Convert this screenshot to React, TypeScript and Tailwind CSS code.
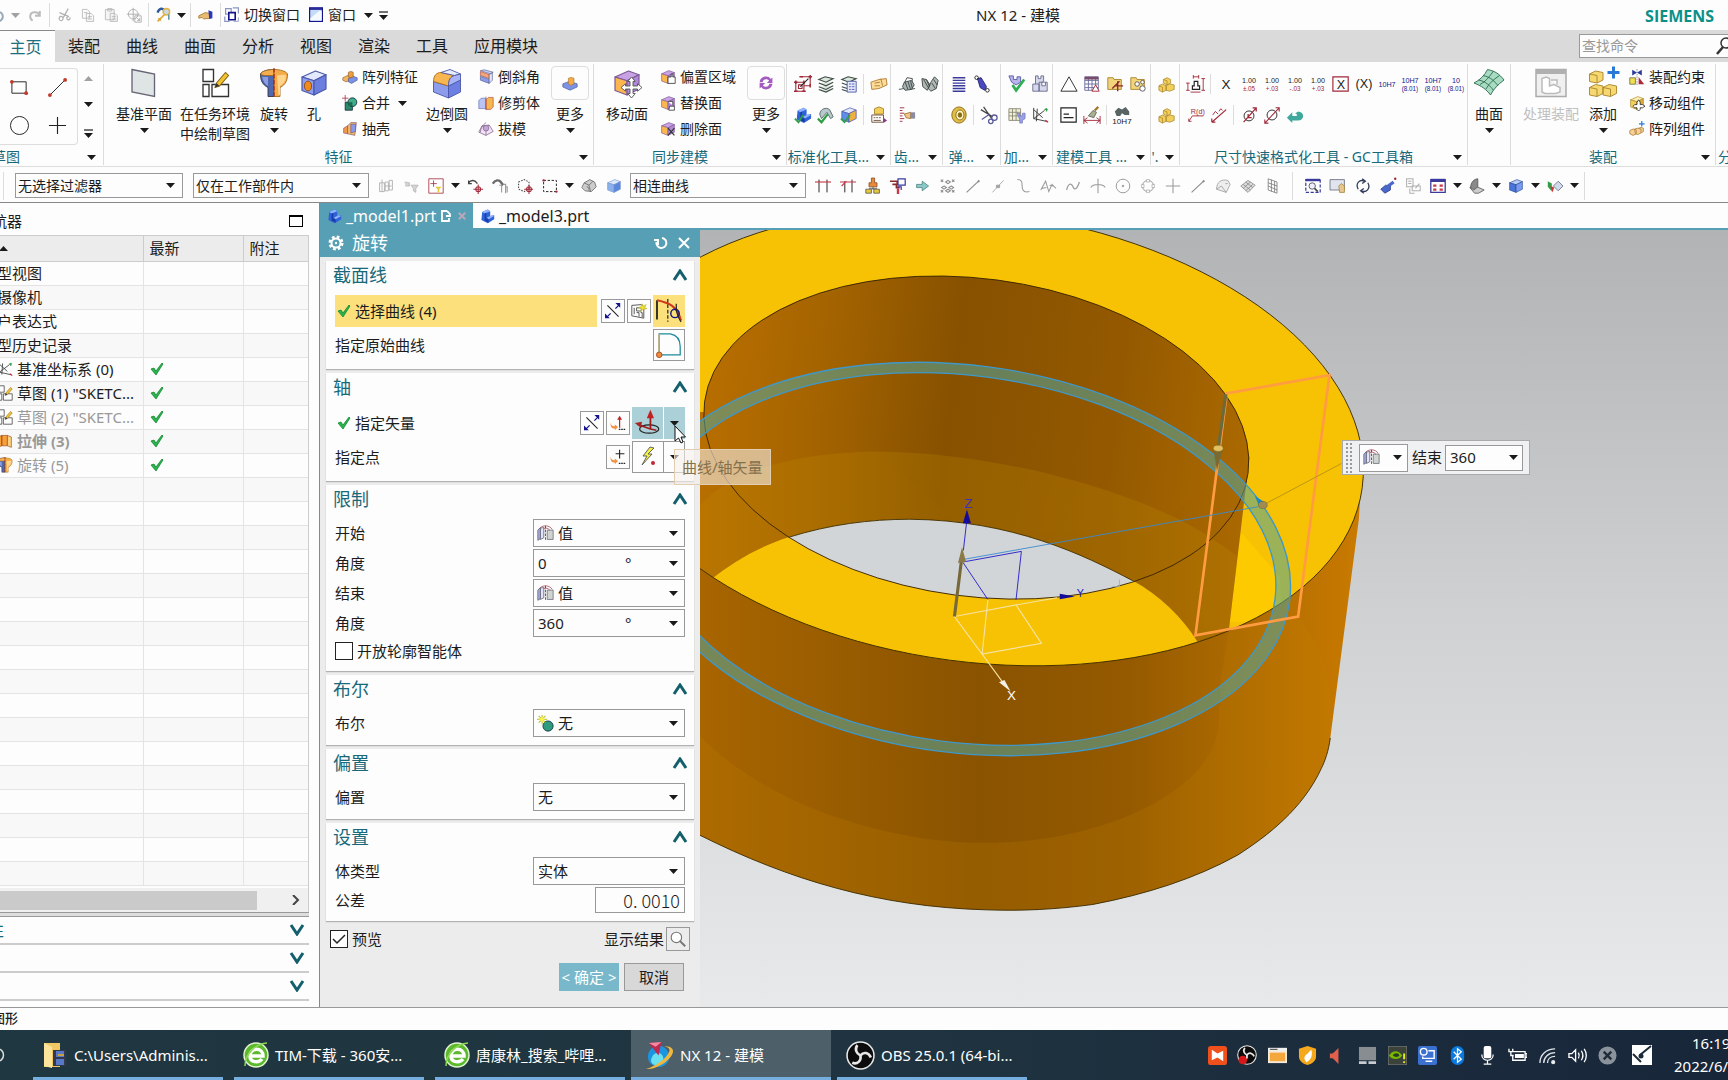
import type { ReactNode } from "react";

const K = "#222";
const NAVY = "#14148c";
const RED = "#a02838";
const G = "#9a9a9a";

function Cube({ top = "#e4e8fc", left = "#8f9ff0", right = "#6c7de0", stroke = "#4a58a8" }) {
  return (
    <g stroke={stroke} strokeWidth=".8" strokeLinejoin="round">
      <path d="M2 6 11 2l7 2.500-8 4z" fill={top} />
      <path d="M2 6l8 2.500V18l-8-3z" fill={left} />
      <path d="M10 8.500l8-4V14l-8 4z" fill={right} />
    </g>
  );
}

function DimText({ a, b, color = K, sub = RED }: { a: string; b?: string; color?: string; sub?: string }) {
  return (
    <g fontFamily="Liberation Sans, sans-serif" textAnchor="middle">
      <text x="10" y={b ? 9 : 13} fontSize="8" fill={color}>{a}</text>
      {b ? <text x="10" y="18" fontSize="7" fill={sub}>{b}</text> : null}
    </g>
  );
}

const gold = { top: "#fdf0b0", left: "#f2cf5a", right: "#d9ae38", stroke: "#a8842a" };
const purple = { top: "#c9a2e6", left: "#fbb64e", right: "#b088d8", stroke: "#7c5a94" };

const boxes = (
  <g stroke="#a8842a" strokeWidth=".8" fill="#f2cf5a">
    <path d="M6 5l4-2 4 2v4l-4 2-4-2z" />
    <path d="M1 12l4-2 4 2v5l-4 2-4-2zM9 12l4-2 5 1v5l-5 2-4-1z" />
    <path d="M1 12l4 1.500V19M6 5l4 1.500V11" fill="none" />
  </g>
);

const partBlock = (
  <g>
    <path d="M4 5l7-3 3 2v6l5-1v5l-8 5-8-4z" fill="#2f62d8" />
    <path d="M4 5l7-3 3 2-7 3zM10 12l6-3 3 1-7 4z" fill="#8fb4ff" />
    <path d="M7 7v9l5 2v-4l-3-1V6z" fill="#1a3ea8" />
  </g>
);

const icons: Record<string, ReactNode> = {
  undo: <path d="M4 4v6h6M4 10c2-6 12-5 12 2 0 3-2 5-5 6" stroke="#9ab" strokeWidth="2.500" fill="none" />,
  redo: <path d="M16 5v6h-6M16 10c-3-5-12-5-12 2 0 2 1 4 3 5" stroke="#bbb" strokeWidth="2.500" fill="none" />,
  cut: <path d="M14 2 8 13M3 7l12 5M6 12a2.500 2.500 0 1 0 1 4 2.500 2.500 0 0 0-1-4zM14 12a2 2 0 1 0 2 1" stroke="#b0b0b0" strokeWidth="1.500" fill="none" />,
  copy: <path d="M3 3h6l3 3v8H3zM8 8h6l3 3v7H8zM10 12h5M10 15h5M5 7h4" stroke="#b4b4b4" fill="#fafafa" />,
  paste: <path d="M3 3h11v13H3zM6 2h5v3H6zM9 8h6l3 3v7H9zM11 12h5M11 15h5" stroke="#b4b4b4" fill="#f4f4f4" />,
  target: <path d="M9 1v17M1 9h16M3 9a6 6 0 1 0 12 0A6 6 0 1 0 3 9M11 11h8v8h-8zM13 13l4 4M17 14v3h-3" stroke="#a4a4a4" fill="none" />,
  key: (
    <g fill="none" strokeWidth="2">
      <path d="M2 7c2-6 7-6 9-2l2 4" stroke="#2d5a9e" strokeWidth="3" />
      <path d="M2 18l9-9M3 14l3 3" stroke="#d9a830" />
      <circle cx="13" cy="6" r="4" stroke="#e0b848" fill="#c8d8f0" />
      <path d="M16 9v7" stroke="#6a9aa8" />
    </g>
  ),
  hand: (
    <g>
      <path d="M1 11l8-4 6 1v6l-8 1-2-2-4 1z" fill="#e8bc74" stroke="#a57628" />
      <path d="M13 4l5 2v8l-4 1z" fill="#2c36b8" />
    </g>
  ),
  winSwitch: (
    <g fill="none">
      <path d="M2 2h7v7H2zM11 1h7v7M1 12v6h6" stroke="#8a96c0" strokeWidth="1.500" />
      <path d="M6 7h8v9H6z" stroke={NAVY} strokeWidth="2" fill="#fff" />
      <path d="M12 18h6v-5" stroke="#8a96c0" />
    </g>
  ),
  win: (
    <g>
      <rect x="2" y="1" width="16" height="17" fill="#c4dcfa" stroke={NAVY} strokeWidth="1.500" />
      <path d="M3 14 14 5h3v12H3z" fill="#f4faff" />
      <path d="M2 2.500h16" stroke={NAVY} strokeWidth="2" />
    </g>
  ),
  rect: (
    <g>
      <path d="M2 4h15v12H2z" fill="none" stroke={K} />
      <circle cx="2" cy="4" r="2" fill="#c0392b" />
      <circle cx="17" cy="16" r="2" fill="#c0392b" />
    </g>
  ),
  line: (
    <g>
      <path d="M2 18 18 2" stroke={K} />
      <circle cx="2" cy="18" r="2" fill="#c0392b" />
      <circle cx="18" cy="2" r="2" fill="#c0392b" />
    </g>
  ),
  circle: <circle cx="10" cy="10" r="9.500" fill="none" stroke={K} />,
  plus: <path d="M10 1v18M1 10h18" stroke={K} strokeWidth="1.200" />,
  plane: <path d="M2 1l15 3v15L2 16z" fill="#dfe5e4" stroke="#667" strokeWidth=".9" />,
  sketch: (
    <g>
      <path d="M2 1h7v8H2zM2 11h4v8H2zM8 11h11v8H8z" fill="#fff" stroke="#333" strokeWidth=".9" />
      <path d="M10 13l1-3 6-7 2 2-6 7z" fill="#f2c530" stroke="#8a6414" strokeWidth=".7" />
      <path d="M10 13l1-3 2 2z" fill="#333" />
    </g>
  ),
  revolve: (
    <g strokeWidth=".6">
      <path d="M1 4c1-2 5-3 9-3v18H6v-6C2 11 1 8 1 4z" fill="#5068b0" stroke="#334" />
      <path d="M1 4c1-2 5-3 9-3v4H6c-2 0-4 0-5-1z" fill="#f5ae52" stroke="#a66a1c" />
      <path d="M2 6c1 3 2 5 4 6v-6z" fill="#8a9ee0" />
      <path d="M10 1c4 0 8 1 9 3 0 4-1 7-5 9v6h-4z" fill="#f5ac48" stroke="#a66a1c" />
      <path d="M12 5c3 0 5-1 6 0 0 4-2 6-4 7v6h-1z" fill="#ffd48c" />
      <path d="M10 0v20" stroke="#a02020" strokeWidth=".8" strokeDasharray="3 1" />
    </g>
  ),
  hole: (
    <g>
      <Cube />
      <ellipse cx="6" cy="12" rx="2.400" ry="3.300" fill="#f08a1c" stroke="#8a4a10" strokeWidth=".6" />
    </g>
  ),
  pattern: (
    <g stroke="#7a5224" strokeWidth=".7">
      <path d="M1 11l6-3 4 2v4l-6 2-4-2z" fill="#f6b45c" />
      <path d="M8 12l6-3 5 2v3l-7 4-4-2z" fill="#7c92e4" stroke="#3a4a90" />
      <path d="M8 4l3-1 3 1v6l-3 1-3-1z" fill="#f09c3c" />
    </g>
  ),
  unite: (
    <g>
      <path d="M4 0v8M0 4h8" stroke="#b03048" />
      <path d="M4 9h9v10H4z" fill="#2c8a6c" stroke="#123" />
      <circle cx="13" cy="9" r="5.500" fill="#3fae8a" stroke="#123" />
      <path d="M8 9h5v5H8z" fill="#1c6a50" />
    </g>
  ),
  shell: (
    <g stroke="#6a4a70" strokeWidth=".7">
      <path d="M2 9l5-3v10l-5-1z" fill="#f0984c" />
      <path d="M7 6l4-4h7l-2 16-9-2z" fill="#f6b868" />
      <path d="M11 4h6v9l-6 2z" fill="#8a9ae8" />
    </g>
  ),
  edge: (
    <g strokeWidth=".6" stroke="#4a58a8">
      <path d="M1 9l10 3v8l-10-4z" fill="#8e9cec" />
      <path d="M11 12l8-4v8l-8 4z" fill="#6d7fe2" />
      <path d="M1 9c0-4 2-6 5-6l9 2c-3 1-4 3-4 7z" fill="#f8b650" stroke="#a86a1c" />
      <path d="M6 3l6-2 7 3-4 1z" fill="#e8ecff" />
      <path d="M15 5l4-1v4l-8 4c0-4 1-6 4-7z" fill="#a9b4f6" />
    </g>
  ),
  chamfer: (
    <g strokeWidth=".7" stroke="#44507c">
      <path d="M3 2l12 4 4-2-11-3z" fill="#c7cff8" />
      <path d="M3 3l11 4v5L3 8z" fill="#f2a87c" stroke="#a03838" />
      <path d="M3 9l11 4v5L3 14z" fill="#8e9cec" />
      <path d="M14 7l4-2v9l-4 4z" fill="#dfe3fb" />
    </g>
  ),
  trim: (
    <g strokeWidth=".7">
      <path d="M1 7l3-3h6v13H1z" fill="#b9c4f4" stroke="#4a58a8" />
      <path d="M10 6l3-3h6v12l-3 3h-6z" fill="#f8b650" stroke="#a03838" />
      <path d="M10 2v17" stroke="#a03838" />
    </g>
  ),
  draft: (
    <g fill="none" stroke="#8a6a94">
      <path d="M1 14 5 6l9-1 5 8-9 5z" fill="#efe4f4" />
      <path d="M10 18V9M5 6l5 3 4-4M3 14c0-5 3-9 7-12" />
      <circle cx="10" cy="9" r="3.500" fill="#c6a6d8" />
    </g>
  ),
  more1: (
    <g strokeWidth=".7">
      <path d="M1 11l8-3 10 3v4l-9 4-9-4z" fill="#7c92e4" stroke="#3a4a90" />
      <path d="M8 4l3-1 4 1v7l-4 2-3-2z" fill="#f5ac48" stroke="#a66a1c" />
    </g>
  ),
  moveFace: (
    <g>
      <Cube {...purple} />
      <path d="M13 6l2.500 3h-1.500v3h3V10.500l3 2.500-3 2.500V14h-3v3h1.500L13 20l-2.500-3H12v-3H9v1.500L6 13l3-2.500V12h3V9h-1.500z" fill="#fff" stroke="#555" strokeWidth=".6" />
    </g>
  ),
  offset: (
    <g>
      <Cube {...purple} />
      <path d="M10 10h4V6h2v4h3v8h-9z" fill="#fff" stroke="#333" />
    </g>
  ),
  replace: (
    <g>
      <Cube {...purple} />
      <path d="M10 8h6v5M12 14h6v5h-7z" fill="#fff" stroke="#333" />
    </g>
  ),
  del: (
    <g>
      <Cube {...purple} />
      <path d="M10 9l8 9M18 9l-8 9" stroke="#333" strokeWidth="1.500" />
    </g>
  ),
  sync: <path d="M2 9c1-8 11-9 14-4l2-2v7h-7l3-3c-3-3-8-2-8 2zM18 11c-1 8-11 9-14 4l-2 2v-7h7l-3 3c3 3 8 2 8-2z" fill="#a45cc0" />,
  std1: (
    <g fill="none" stroke={RED} strokeWidth="1.200">
      <path d="M8 2h10v10h-7M2 8h9v10H2zM5 11h4v4H5z" />
      <path d="M6 2h4M18 0v4M16 2h4M18 10v4M2 6v4M0 8h4M0 18h4M9 18h4M11 6v4" strokeWidth="1.600" />
      <path d="M7 13l9-9" stroke={K} />
    </g>
  ),
  layers: <path d="M2 5l7-3 9 2-8 4zM2 9l8 3 8-4M2 13l8 3 8-4M2 16l8 3 8-4" fill="#dde6dd" stroke="#3c4c46" strokeWidth="1.200" />,
  layersDoc: (
    <g>
      <path d="M2 5l7-3 9 2-8 4zM2 9l6 2M2 13l6 2M2 16l6 2" fill="#dde6dd" stroke="#3c4c46" strokeWidth="1.200" />
      <path d="M8 7h10v12H8zM10 10h2M13 10h3M10 13h2M13 13h3M10 16h2M13 16h3" fill="#e6e8fc" stroke="#4a58a8" />
    </g>
  ),
  tag: <path d="M1 8l9-3 8-1 1 7-9 4-8 1zM5 9l6-1M5 12h6M12 4l2 8" fill="#fbdc98" stroke="#b07a30" />,
  chkBlock: (
    <g>
      {partBlock}
      <path d="M1 14l4 4 5-8" stroke="#2f9e44" strokeWidth="2" fill="none" />
    </g>
  ),
  chkTool: (
    <g fill="none">
      <path d="M3 9c1-6 7-8 11-5l4 8-3 2-4-7-6 7z" fill="#b8c8cc" stroke="#566" />
      <path d="M1 14l4 4 7-9" stroke="#2f9e44" strokeWidth="2.500" />
    </g>
  ),
  chkCube: (
    <g>
      <Cube left="#5d8fe8" right="#f0b040" />
      <path d="M1 14l4 4 6-8" stroke="#2f9e44" strokeWidth="2" fill="none" />
    </g>
  ),
  calc: (
    <g>
      <path d="M5 3l5-2 5 2v6H5z" fill="#f2cf5a" stroke="#a8842a" />
      <path d="M2 10h13v8H2zM4 13h2M7 13h2M10 13h2M4 16h8" fill="#fff" stroke="#6a4a30" />
      <path d="M15 13l4 3-4 3z" fill="#8a3a8a" />
    </g>
  ),
  gear1: (
    <g fill="#a8b2b2" stroke="#3c4444">
      <path d="M7 9l3-6 6 1-1 8M1 16l6-1 2-4M19 15l-5 1" fill="none" />
      <path d="M7 8l8-2 3 5-3 5-7 1-3-4z" />
      <path d="M8 8l3 8M11 7l3 9M14 7l2 8" fill="none" />
    </g>
  ),
  gear2: (
    <g fill="#b2b8b2" stroke="#3c4444">
      <path d="M1 4l5 1 4 6-3 6-5-4zM11 8l4-6 4 4-2 9-6 3-3-3z" />
      <path d="M3 5l5 9M6 5l3 7M12 9l4 6M14 5l4 6" fill="none" />
    </g>
  ),
  ruler: (
    <g>
      <path d="M2 2h5M2 5h3M2 8h5M2 11h3M2 14h5M2 17h3" stroke={RED} />
      <path d="M7 9l7-2v7l-5-1z" fill="#f1c590" stroke="#a57628" />
      <path d="M14 7h5v7h-5z" fill="#8a8aa0" />
    </g>
  ),
  spring: <path d="M3 3h14M3 6h14M3 9h14M3 12h14M3 15h14M3 18h14" stroke="#3a3a9c" strokeWidth="1.600" />,
  shock: (
    <g>
      <path d="M5 4l4-1 6 10-2 4-5-3z" fill="#4a4ac0" stroke="#22226c" />
      <circle cx="4" cy="3" r="2" fill="none" stroke={K} />
      <circle cx="16" cy="17" r="2" fill="none" stroke={K} />
    </g>
  ),
  coil: (
    <g stroke="#8a6a14">
      <ellipse cx="10" cy="10" rx="8" ry="9" fill="#e0bc48" />
      <ellipse cx="11" cy="10" rx="4.500" ry="5.500" fill="#fff6c8" />
      <ellipse cx="11" cy="10" rx="2" ry="2.500" fill="#8a6a14" />
    </g>
  ),
  scissor: (
    <g fill="none" stroke="#5a5a9c" strokeWidth="1.400">
      <path d="M4 1l9 13M1 4l13 8" stroke="#444" />
      <path d="M2 15l9-6" />
      <circle cx="16" cy="13" r="3" />
      <circle cx="12" cy="17" r="2.500" />
    </g>
  ),
  chkPurple: (
    <g>
      <path d="M1 1h5v4h4V2h4v6l-5 3-5-3z" fill="#b9b4ec" stroke="#5a5aa8" />
      <path d="M5 11l4 6 9-12" stroke="#2fae54" strokeWidth="3" fill="none" />
    </g>
  ),
  stack: (
    <g fill="#d6d8ec" stroke="#6a6a90">
      <path d="M5 1h3v3h3V1h3v6l-3 2v3H5z" />
      <path d="M2 10h7v8H2zM9 8h9v10H9zM12 8v4h4V8" />
    </g>
  ),
  gridTool: (
    <g>
      <path d="M1 3h13v13H1zM1 7h13M1 11h13M5 3v13M9 3v13" fill="#f2efd8" stroke="#8a8a74" />
      <path d="M10 8h3v3h3V8h3v6l-3 2v3h-3v-4z" fill="#9aa2e8" stroke="#5a5aa8" strokeWidth=".6" />
    </g>
  ),
  csys: (
    <g fill="none" stroke="#333">
      <path d="M3 2v12l14 3M3 14l12-9M3 4l10 9M7 3l-1 14" />
      <path d="M18 3l-3 1M18 3l-1 3" stroke="#2f9e44" strokeWidth="1.500" />
      <path d="M16 16l3 2" stroke="#c02838" strokeWidth="1.500" />
    </g>
  ),
  tri: <path d="M10 2l9 16H1z" fill="none" stroke={K} />,
  table: (
    <g>
      <path d="M2 2h15v15H2zM2 6h15M2 10h15M2 14h15M6 2v15M10 2v15M14 2v15" fill="#fff" stroke="#6a6a9a" />
      <path d="M2 2h15v3H2z" fill="#7a4a6a" />
      <path d="M14 11l4 7h-8z" fill="#fff" stroke={RED} />
    </g>
  ),
  folderPlus: (
    <g>
      <path d="M2 3h6l1 2h8v11H2z" fill="#f2d47a" stroke="#a8842a" />
      <path d="M7 15l8-8M9 12h10M13 7v11" stroke="#8a2a2a" strokeWidth="1.500" />
    </g>
  ),
  folderGear: (
    <g>
      <path d="M2 3h6l1 2h8v11H2z" fill="#f2d47a" stroke="#a8842a" />
      <circle cx="9" cy="10" r="2.500" fill="#fff" stroke="#555" />
      <circle cx="15" cy="8" r="2" fill="#fff" stroke="#555" />
      <circle cx="15" cy="15" r="3" fill="#fff" stroke="#555" />
    </g>
  ),
  note: <path d="M1 2h17v16H1zM4 9h6M4 13h11" fill="#fff" stroke={K} strokeWidth="1.300" />,
  brush: (
    <g>
      <path d="M6 11l5-6 4 2-3 6z" fill="#a8b090" stroke="#666" />
      <path d="M13 5l4-4" stroke="#a57628" strokeWidth="2.500" />
      <path d="M1 11v9M19 11v9M1 16h18M5 13l-4 3 4 3M15 13l4 3-4 3" stroke={RED} fill="none" />
    </g>
  ),
  find: (
    <g>
      <path d="M2 6l4-4 4 2 4-3 4 5v4h-5l-3-2-2 3H4z" fill="#586464" />
      <text x="10" y="20" fontSize="9" fontFamily="Liberation Sans, sans-serif" textAnchor="middle" fill={K}>10H7</text>
    </g>
  ),
  boxes,
  dim: (
    <g fill="none" stroke={RED}>
      <path d="M1 9v8M-1 9h4M-1 17h4M18 4v13M16 4h4M16 17h4M7 2h6M7 0v4M13 0v4M4 19h11" />
      <path d="M6 16v-4h2V7h4v5h2v4z" stroke={K} strokeWidth="1.300" />
    </g>
  ),
  x: <text x="10" y="15" fontSize="15" fontFamily="Liberation Sans, sans-serif" textAnchor="middle" fill={K}>X</text>,
  d1: <DimText a="1.00" b="±.05" />,
  d2: <DimText a="1.00" b="+.03" />,
  d3: <DimText a="1.00" b="-.03" />,
  xBox: (
    <g>
      <path d="M1 2h17v16H1z" fill="none" stroke={RED} strokeWidth="1.300" />
      <text x="10" y="15" fontSize="14" fontFamily="Liberation Sans, sans-serif" textAnchor="middle" fill={K}>X</text>
    </g>
  ),
  xPar: <text x="10" y="14" fontSize="14" fontFamily="Liberation Sans, sans-serif" textAnchor="middle" fill={K}>(X)</text>,
  h1: <DimText a="10H7" color={NAVY} />,
  h2: <DimText a="10H7" b="(8.01)" color={NAVY} sub={NAVY} />,
  h3: <DimText a="10" b="(8.01)" color={NAVY} sub={NAVY} />,
  ra: (
    <g fill="none" stroke={RED}>
      <path d="M2 17l4-6h12M2 17v-3M2 17h3" />
      <text x="12" y="9" fontSize="8" fontFamily="Liberation Sans, sans-serif" textAnchor="middle" fill={RED} stroke="none">R(d)</text>
    </g>
  ),
  rb: (
    <g fill="none" stroke={RED}>
      <path d="M2 18 18 4M2 18v-4M2 18h4" strokeWidth="1.300" />
      <path d="M3 10l3-4 3 3M10 6l2-3 2 2" />
    </g>
  ),
  dia1: (
    <g fill="none">
      <circle cx="10" cy="11" r="5.500" stroke={K} />
      <path d="M4 18 18 2M14 2h4v4M9 9v4h4" stroke={RED} strokeWidth="1.400" />
    </g>
  ),
  dia2: (
    <g fill="none">
      <circle cx="10" cy="10" r="5.500" stroke={K} />
      <path d="M2 19 18 2M2 15v4h4M14 2h4v4" stroke={RED} strokeWidth="1.200" />
    </g>
  ),
  back: <path d="M1 13l6-6v4h5V9l-2-1 4-2c4 1 5 3 5 5 0 3-2 5-6 5H7v3z" fill="#3fa89c" />,
  surface: (
    <g stroke="#2c6a50" strokeWidth=".6">
      <path d="M0 10c4-2 7-5 9-9 5 1 8 3 11 7-4 3-7 6-9 10-3-4-6-6-11-8z" fill="#a8dcc2" />
      <path d="M3 8c5 1 8 4 10 7M6 5c5 1 8 4 10 7M4 11c4-2 6-5 9-9M8 14c2-4 6-7 9-9" fill="none" />
    </g>
  ),
  procAsm: (
    <g>
      <path d="M0 1h20v18H0z" fill="#f0f0f0" stroke="#aaa" />
      <path d="M0 1h20v3H0z" fill="#b0b0b0" />
      <path d="M4 7l3-1 2 1v5l3-1 4 2v3l-3 1H6l-2-1zM10 8h4v3" fill="#fff" stroke="#bbb" />
    </g>
  ),
  addComp: (
    <g>
      <g stroke="#a8842a" strokeWidth=".6" fill="#f6d870">
        <path d="M1 4l4-2 5 1v5l-4 2-5-1zM1 13l4-2 5 1v5l-4 2-5-1zM10 13l4-2 5 1v5l-4 2-5-1z" />
        <path d="M1 4l5 1v5M1 13l5 1v5M10 13l5 1v5" fill="none" />
      </g>
      <path d="M17-1v8M13 3h8" stroke="#2878d8" strokeWidth="2" />
    </g>
  ),
  constraint: (
    <g>
      <path d="M4 1v7l12-7v7L4 1z" fill="#2a3a9c" />
      <path d="M1 11h7v8H1z" fill="#f2e04a" stroke="#665" />
      <path d="M12 10l7 9h-7z" fill="#b02838" />
      <path d="M10 0v20" stroke="#888" strokeDasharray="2 1" />
    </g>
  ),
  moveComp: (
    <g>
      <Cube {...gold} />
      <path d="M12 6l2 3v3h3l3 2-3 2h-3v2l-2 2-2-2v-2H7l-2-2 2-2h3V9z" fill="#fff" stroke={K} />
    </g>
  ),
  patComp: (
    <g>
      <path d="M1 12l4-2 4 1v5l-4 2-4-2zM7 10l4-1 4 1v5l-4 2-3-1zM12 9l3-1 3 1v4l-3 2" fill="#f6d098" stroke="#b0803a" />
      <path d="M16 0v7M12.500 3.500h7" stroke="#2878d8" strokeWidth="1.500" />
    </g>
  ),
  f1: <path d="M2 6h6v11H2zM5 2v15M9 5h4v11H9zM14 3h4v12h-4zM9 10h8" fill="none" stroke="#b4b4b4" strokeWidth="1.200" />,
  f2: <path d="M2 5l6 1v4H3M10 9h9l-3 4v5l-3-2v-3z" fill="#d4d4d4" stroke="#b4b4b4" />,
  f3: (
    <g>
      <path d="M1 1h18v18H1z" fill="#fff" stroke={RED} />
      <path d="M7 3v8M3 7h8" stroke={RED} />
      <path d="M9 11h8l-3 3v4h-2v-4z" fill="#e8c83a" />
    </g>
  ),
  f4: (
    <g fill="none">
      <path d="M2 6c3-4 8-4 11 1M2 3v4h4" stroke="#444" strokeWidth="1.600" />
      <path d="M14 8v12M8 14h12M11 14a3 3 0 1 0 6 0 3 3 0 0 0-6 0" stroke={RED} strokeWidth="1.300" />
    </g>
  ),
  f5: (
    <g fill="none">
      <path d="M1 7c3-5 8-5 10-2l3 4" stroke="#6a6a6a" strokeWidth="3" />
      <path d="M9 9h3v9M14 8h3v11M17 11h2v7" stroke="#9a9a9a" strokeWidth="1.400" />
    </g>
  ),
  f6: (
    <g fill="none">
      <path d="M2 5l7-3 6 3v8l-6 4-7-3z" stroke="#444" strokeWidth="1.300" strokeDasharray="2 1.500" />
      <path d="M15 9v11M9 14h11M12 14a3 3 0 1 0 6 0 3 3 0 0 0-6 0" stroke={RED} strokeWidth="1.300" />
    </g>
  ),
  f7: (
    <g>
      <path d="M2 3h16v14H2z" fill="none" stroke={K} strokeWidth="1.200" strokeDasharray="3 2" />
      <circle cx="2" cy="3" r="1.500" fill={RED} />
      <circle cx="18" cy="17" r="1.500" fill={RED} />
    </g>
  ),
  f8: (
    <g fill="#ccc" stroke="#666">
      <path d="M1 12l3-6 7-4 6 3 2 6-6 6-8-1z" />
      <path d="M4 6l6 3 2 8M10 9l5-5M7 11c3 0 3 2 3 5" fill="none" />
    </g>
  ),
  f9: <Cube top="#dceafc" left="#8ab0ee" right="#5a86dc" stroke="#7a98d0" />,
  s1: (
    <g fill="none">
      <path d="M5 2v16M15 2v16" stroke={K} strokeWidth="1.200" />
      <path d="M0 5h20" stroke="#c83848" strokeWidth="1.400" />
    </g>
  ),
  s2: (
    <g fill="none">
      <path d="M6 4v14M15 2v16" stroke={K} strokeWidth="1.200" />
      <path d="M0 5h20M2 10l6-6" stroke="#c83848" strokeWidth="1.400" />
    </g>
  ),
  s3: (
    <g>
      <path d="M8 0h4v6h3v5H5V6h3z" fill="#e88a3c" stroke="#8a4a20" />
      <path d="M10 11v4M5 13h10" stroke="#555" />
      <path d="M1 14h7v5H1zM11 14h7v5h-7z" fill="#e8c83a" stroke="#555" />
    </g>
  ),
  s4: (
    <g fill="none" strokeWidth="1.500">
      <path d="M0 4h9v4H3M8 7v5h4" stroke="#8a2a2a" strokeWidth="2" />
      <path d="M10 1h9v8h-9zM9 11h5v4" stroke="#3a3a9c" />
      <path d="M10 13v7" stroke="#c83848" strokeWidth="3" />
    </g>
  ),
  s5: <path d="M2 8h7V4l8 6-8 6v-4H2z" fill="#8cc8c8" stroke="#4a8080" />,
  s6: (
    <g stroke="#8a8a8a" strokeWidth="1.300" fill="none">
      <path d="M1 2l3 3M4 2 1 5M15 2l3 3M18 2l-3 3M1 15l3 3M4 15l-3 3M15 15l3 3M18 15l-3 3M10 3l3 2-3 2-3-2zM5 10l3 2-3 2-3-2zM14 10l3 2-3 2-3-2zM10 14l3 2-3 2-3-2z" />
    </g>
  ),
  s7: (
    <g stroke="#888">
      <path d="M2 18 17 4" strokeWidth="1.300" />
      <circle cx="17" cy="4" r="1" fill="#888" />
    </g>
  ),
  s8: (
    <g stroke="#999" fill="none">
      <path d="M3 18 17 3" />
      <path d="M8 9h4v3H8z" fill="#aaa" />
    </g>
  ),
  s9: <path d="M3 2c9 0 4 8 7 13 1 2 4 3 8 2" stroke={G} strokeWidth="1.300" fill="none" />,
  s10: <path d="M1 15l6-11 4 13 4-9 5 5M2 13l6-1M12 9l5 1" stroke={G} strokeWidth="1.300" fill="none" />,
  s11: <path d="M2 15c2-9 6-9 8-4s5 3 8-6" stroke={G} strokeWidth="1.500" fill="none" />,
  s12: <path d="M10 1v18M1 12c3-5 15-5 18 0" stroke={G} strokeWidth="1.300" fill="none" />,
  s13: (
    <g fill="none" stroke={G} strokeWidth="1.200">
      <circle cx="10" cy="10" r="8.500" />
      <circle cx="10" cy="10" r="1" fill={G} />
    </g>
  ),
  s14: (
    <g fill="none" stroke={G} strokeWidth="1.200">
      <circle cx="10" cy="10" r="7" />
      <path d="M8 2h4v3H8zM8 15h4v3H8zM2 8h3v4H2zM15 8h3v4h-3z" fill="#fff" strokeWidth=".8" />
    </g>
  ),
  s15: <path d="M10 1v18M1 10h18" stroke={G} strokeWidth="1.300" />,
  s17: <path d="M2 14c0-9 6-13 14-11l3 5-5 10zM2 14l6-4 6 8M13 7h3" fill="#eee" stroke={G} />,
  s18: (
    <g fill="#ddd" stroke="#888">
      <path d="M1 10l9-7 9 6-9 9z" />
      <path d="M4 8l9 7M7 5l9 7M4 13l9-8M7 16l9-8" fill="none" />
    </g>
  ),
  s19: <path d="M4 1l11 4v14L4 15zM4 6l11 4M4 10l11 5M8 2v15M12 4v14" fill="none" stroke="#777" />,
  v1: (
    <g>
      <path d="M1 2h18v16H1z" fill="none" stroke="#3a3a9c" strokeWidth="1.500" strokeDasharray="4 2" />
      <path d="M1 1h18v3H1z" fill="#3a3a9c" />
      <circle cx="9" cy="10" r="4" fill="#eef" stroke="#444" />
      <path d="M12 13l4 4" stroke="#444" strokeWidth="2" />
    </g>
  ),
  v2: (
    <g>
      <path d="M0 2h18v13H0z" fill="#dfe4ee" stroke="#667" />
      <path d="M11 10l3-3 4 3v8h-6z" fill="#e8c890" stroke="#a8843a" />
    </g>
  ),
  v3: <path d="M4 14C0 7 6 1 12 4M16 6c4 7-2 13-8 10M9 1l4 3-4 3M11 19l-4-3 4-3" fill="none" stroke="#333c5c" strokeWidth="1.600" />,
  v4: (
    <g>
      <path d="M1 14l6-5 6 1v5l-7 4z" fill="#4a68cc" stroke="#2a3a80" />
      <path d="M9 11l8-6" stroke="#4a68cc" strokeWidth="4" />
      <circle cx="19" cy="1" r="1.500" fill={RED} />
    </g>
  ),
  v5: <path d="M2 1h8v10H2zM4 4h4M4 7h4M9 10h10v6H9zM6 13v6h6M13 13l5-6" fill="none" stroke="#b0b0b0" strokeWidth="1.300" />,
  v6: (
    <g>
      <path d="M1 2h18v16H1z" fill="#fff" stroke="#3a3a9c" strokeWidth="1.600" />
      <path d="M1 1h18v4H1z" fill="#3a3a9c" />
      <path d="M4 8h4v3H4zM12 8h4v3h-4zM4 13h4v3H4zM12 13h4v3h-4z" fill="#c83848" />
    </g>
  ),
  v7: (
    <g stroke="#555">
      <path d="M1 12l7-2 11 5-7 4H7z" fill="#ccc" />
      <path d="M2 12C2 5 7 1 11 1v10l-5 4z" fill="#8a8a8a" />
    </g>
  ),
  v8: <Cube top="#b8ccf8" left="#4a74d8" right="#7a9cf0" stroke="#2a4a98" />,
  v9: (
    <g>
      <path d="M1 4l5 3v10l-5-6z" fill="#2f9e44" />
      <path d="M4 10l5 2-2 6z" fill="#c83838" />
      <path d="M8 10l6-6 6 6-6 6z" fill="#d0dcec" stroke="#667" />
    </g>
  ),
  prt: partBlock,
  extrude: (
    <g strokeWidth=".7" stroke="#8a3a10">
      <path d="M1 5l5-2v13l-5 2zM6 3h7v13H6z" fill="#f6a03c" />
      <path d="M13 3l5 2v13l-5-2z" fill="#fcd080" />
    </g>
  ),
  limits: (
    <g strokeWidth=".9">
      <path d="M1 6l3-3v13l-3 2z" fill="#aab4e8" stroke="#556" />
      <path d="M4 4c2-1 3-1 4-1v12l-4 2z" fill="#dfe4fb" stroke="#556" />
      <path d="M12 6h7v11h-7z" fill="#cfd4cf" stroke="#667" />
      <path d="M4 3c4-3 10-3 14 2M8 4c3-1 5 0 7 2" stroke="#a04050" fill="none" />
      <path d="M10 1v18" stroke="#333" strokeDasharray="3 1.500" />
    </g>
  ),
  boolNone: (
    <g>
      <circle cx="13" cy="13" r="6" fill="#2f9a7c" stroke="#134" />
      <path d="M6 0v11M0 5h12M2 1l8 8M10 1 2 9" stroke="#b8c020" strokeWidth="1.200" />
      <circle cx="6" cy="5" r="2.500" fill="#fff04a" />
    </g>
  ),
  flip: (
    <g>
      <path d="M3 3l14 14" stroke={K} strokeWidth="1.300" />
      <path d="M13 7l5-5M7 13l-5 5" stroke={NAVY} strokeWidth="1.600" />
      <path d="M19 0v6l-6-6zM0 19v-6l6 6z" fill={NAVY} />
    </g>
  ),
  section: (
    <g fill="none" stroke="#555" strokeWidth="1.200">
      <path d="M1 3l12-1 3 3v14L1 16zM4 6v8M7 6h6v4H7zM7 12h3v5M12 12h2v6" />
      <path d="M14 1l1 3 4-2-2 4 3 1-5 1-3 3 1-4-4-1 4-2z" fill="#f0e030" stroke="#a8a020" strokeWidth=".6" />
    </g>
  ),
  curveRule: (
    <g fill="none">
      <path d="M0 1v16" stroke={K} strokeWidth="1.500" />
      <path d="M0 1c10 2 17 5 20 17" stroke="#d03a1c" strokeWidth="1.800" />
      <path d="M9 0v19" stroke={K} strokeDasharray="3 1.500" />
      <circle cx="15" cy="12" r="3.500" stroke={NAVY} strokeWidth="1.200" />
      <path d="M16 4c0 5 0 9 4 15" stroke={K} />
    </g>
  ),
  origin: (
    <g>
      <path d="M3 17V2h8c5 1 7 5 7 9v6z" fill="none" stroke="#1c8a9c" strokeWidth=".9" />
      <path d="M3 17V2" stroke="#e0a050" />
      <circle cx="3" cy="17" r="2" fill="#f0883c" stroke="#a04818" strokeWidth=".6" />
    </g>
  ),
  vecDlg: (
    <g>
      <path d="M12 16V4" stroke="#c02020" strokeWidth="1.500" />
      <path d="M12 1l3 5H9z" fill="#c02020" />
      <path d="M1 9c0 4 2 5 5 5v-2l4 3-4 4v-2c-4 0-6-3-5-8z" fill="#f09040" />
      <path d="M11 18h2M14 18h2M17 18h2" stroke={K} strokeWidth="1.600" />
    </g>
  ),
  ptDlg: (
    <g>
      <path d="M12 1v11M7 6h11" stroke={K} strokeWidth="1.400" />
      <path d="M1 9c0 4 2 5 5 5v-2l4 3-4 4v-2c-4 0-6-3-5-8z" fill="#f09040" />
      <path d="M11 18h2M14 18h2M17 18h2" stroke={K} strokeWidth="1.600" />
    </g>
  ),
  axis: (
    <g>
      <ellipse cx="11" cy="15" rx="8" ry="3.500" fill="none" stroke={K} />
      <path d="M12 15V4" stroke="#a01818" strokeWidth="1.500" />
      <path d="M12-1l3 7H9z" fill="#c02020" />
      <path d="M12 15 1 11M12 15l5 1" stroke="#a01818" strokeWidth="1.200" />
      <path d="M-1 10l6-1-1 5z" fill="#a02828" />
    </g>
  ),
  inferred: (
    <g>
      <path d="M12 0 5 9h4l-5 9 10-11h-4l6-6z" fill="#f4f040" stroke="#555" strokeWidth=".9" />
      <circle cx="15" cy="16" r="2" fill="#c02838" />
    </g>
  ),
  magnify: (
    <g fill="none" stroke="#777">
      <circle cx="8" cy="8" r="6.500" strokeWidth="1.400" fill="#fff" />
      <path d="M12 12l7 7" strokeWidth="2.500" />
    </g>
  ),
};

function Ico({ n, className = "size-[18px]" }: { n: string; className?: string }) {
  return (
    <svg viewBox="0 0 20 20" className={`shrink-0 overflow-visible ${className}`} aria-hidden="true">
      {icons[n]}
    </svg>
  );
}

function Caret({ className = "" }: { className?: string }) {
  return (
    <svg viewBox="0 0 9 5" className={`h-[5px] w-[9px] shrink-0 ${className}`} aria-hidden="true">
      <path d="M0 0h9L4.500 5z" fill="#1a1a1a" />
    </svg>
  );
}

function BarCaret() {
  return (
    <svg viewBox="0 0 9 9" className="size-[9px] shrink-0" aria-hidden="true">
      <path d="M0 1h9" stroke="#1a1a1a" strokeWidth="1.200" />
      <path d="M0 4h9L4.500 9z" fill="#1a1a1a" />
    </svg>
  );
}

function Check({ className = "size-3.5" }: { className?: string }) {
  return (
    <svg viewBox="0 0 14 14" className={`shrink-0 ${className}`} aria-hidden="true">
      <path d="M1 7l3-1 2 3L12 1l1 1-7 11z" fill="#2bb24c" stroke="#138a34" strokeWidth=".8" />
    </svg>
  );
}

function Chevron({ down = false }: { down?: boolean }) {
  return (
    <svg viewBox="0 0 16 12" className="h-3 w-4" aria-hidden="true">
      <path d={down ? "M2 1l6 9 6-9" : "M2 11l6-9 6 9"} fill="none" stroke="#145f6c" strokeWidth="3" />
    </svg>
  );
}

function IconButton({ n, className = "w-[23px]", size = "size-[18px]" }: { n: string; className?: string; size?: string }) {
  return (
    <button type="button" aria-label={n} className={`flex shrink-0 items-center justify-center ${className}`}>
      <Ico n={n} className={size} />
    </button>
  );
}

function Sep({ className = "h-6" }: { className?: string }) {
  return <span className={`mx-[3px] w-px shrink-0 bg-[#dcdcdc] ${className}`} />;
}

/* ---------- title bar and ribbon ---------- */

function TitleBar() {
  return (
    <header className="relative flex h-[30px] shrink-0 items-center bg-[#fdfdfd] pr-3.5 text-sm">
      <div className="-ml-3 flex items-center">
        <IconButton n="undo" className="w-5" size="size-4" />
        <span className="flex w-[15px] justify-center opacity-40"><Caret /></span>
        <IconButton n="redo" size="size-4" />
        <Sep />
        <IconButton n="cut" size="size-4" />
        <IconButton n="copy" size="size-4" />
        <IconButton n="paste" size="size-4" />
        <IconButton n="target" size="size-4" />
        <Sep />
        <IconButton n="key" size="size-4" />
        <span className="flex w-3 justify-center"><Caret /></span>
        <Sep />
        <IconButton n="hand" size="size-4" />
        <Sep />
        <button type="button" className="flex items-center gap-1">
          <Ico n="winSwitch" className="size-4" />切换窗口
        </button>
        <button type="button" className="ml-2 flex items-center gap-1">
          <Ico n="win" className="size-4" />窗口
          <Caret className="ml-1" />
        </button>
        <span className="ml-1.5"><BarCaret /></span>
      </div>
      <div className="absolute inset-x-0 text-center">
        <h1 className="pt-0.5 pl-[308px] text-[15px]">NX 12 - 建模</h1>
      </div>
      <span className="ml-auto pt-0.5 font-['Open_Sans',sans-serif] text-base font-bold text-[#0a9088]">SIEMENS</span>
    </header>
  );
}

const menus = ["装配", "曲线", "曲面", "分析", "视图", "渲染", "工具", "应用模块"];

function MenuTabs() {
  return (
    <nav className="flex h-8 shrink-0 items-center overflow-hidden bg-[#dadada] text-base">
      <button type="button" className="h-full w-[55px] shrink-0 border-t border-[#888] bg-[#fdfdfd] pr-1 text-[#1b6f80]">
        主页
      </button>
      {menus.map((m) => (
        <button key={m} type="button" className="px-[13px]">
          {m}
        </button>
      ))}
      <label className="-mr-2 ml-auto flex h-6 w-[157px] items-center border border-[#999] bg-[#fdfdfd] pl-0.5">
        <input placeholder="查找命令" aria-label="查找命令" className="w-0 flex-1 bg-transparent text-sm outline-none placeholder:text-[#999]" />
        <svg viewBox="0 0 20 20" className="size-5" aria-hidden="true">
          <circle cx="11" cy="7" r="5" fill="none" stroke="#333" strokeWidth="1.500" />
          <path d="M8 11 2 18" stroke="#333" strokeWidth="2.500" />
        </svg>
      </label>
    </nav>
  );
}

function Group({ label, className, children }: { label: string; className: string; children: ReactNode }) {
  return (
    <section className={`mt-0.5 mb-px flex shrink-0 flex-col border-r border-[#dcdcdc] ${className}`}>
      <div className="flex flex-1">{children}</div>
      <div className="flex h-4 items-center text-sm leading-4 whitespace-nowrap text-[#17697a]">
        <span className="flex-1 text-center">{label}</span>
        <span className="flex w-5 justify-center"><Caret /></span>
      </div>
    </section>
  );
}

function Big({ n, lines, caret, className, muted }: { n: string; lines: string[]; caret?: boolean; className: string; muted?: boolean }) {
  return (
    <button type="button" className={`flex shrink-0 flex-col items-center pt-1 text-sm leading-5 whitespace-nowrap ${muted ? "text-[#c0c0c0]" : ""} ${className}`}>
      <Ico n={n} className="mb-1.5 size-[30px]" />
      {lines.map((l) => (
        <span key={l}>{l}</span>
      ))}
      {caret ? <Caret className="mt-1" /> : null}
    </button>
  );
}

function More({ n }: { n: string }) {
  return (
    <button type="button" className="ml-2.5 flex w-10 shrink-0 flex-col items-center pt-0.5 text-sm leading-5">
      <span className="mb-1 flex h-[34px] w-[38px] items-center justify-center rounded border border-[#ddd]">
        <Ico n={n} className="size-4" />
      </span>
      更多
      <Caret className="mt-1" />
    </button>
  );
}

function SmallCol({ items }: { items: [string, string, boolean?][] }) {
  return (
    <div className="flex shrink-0 flex-col">
      {items.map(([n, text, caret]) => (
        <button key={text} type="button" className="flex h-[26px] items-center gap-0.5 text-sm whitespace-nowrap">
          <span className="flex w-5 justify-center"><Ico n={n} className="size-4" /></span>
          {text}
          {caret ? <Caret className="ml-1.5" /> : null}
        </button>
      ))}
    </div>
  );
}

function IconGrid({ rows }: { rows: string[][] }) {
  return (
    <div className="flex flex-col pt-1 pl-1">
      {rows.map((r, i) => (
        <div key={i} className="flex h-[31px] items-center">
          {r.map((n, j) => (n === "|" ? <Sep key={j} className="h-5" /> : <IconButton key={j} n={n} />))}
        </div>
      ))}
    </div>
  );
}

function Ribbon() {
  return (
    <div className="flex h-[105px] shrink-0 overflow-hidden border-b border-[#ddd] bg-[#fdfdfd]">
      <section className="mt-0.5 mb-px flex w-[104px] shrink-0 flex-col border-r border-[#dcdcdc]">
        <div className="flex flex-1 items-center">
          <div className="grid h-[77px] w-[78px] grid-cols-2 place-items-center rounded-r border-y border-r border-[#ddd]">
            {["rect", "line", "circle", "plus"].map((n) => (
              <IconButton key={n} n={n} className="w-9" size="size-[19px]" />
            ))}
          </div>
          <div className="flex h-[62px] flex-1 flex-col items-center justify-between pr-1">
            <Caret className="rotate-180 opacity-40" />
            <Caret />
            <BarCaret />
          </div>
        </div>
        <div className="flex h-4 items-center text-sm leading-4 text-[#17697a]">
          <span className="-ml-2 flex-1">草图</span>
          <span className="flex w-6 justify-center"><Caret /></span>
        </div>
      </section>
      <Group label="特征" className="w-[490px] [&>div:first-child]:pl-1">
        <Big n="plane" lines={["基准平面"]} caret className="w-[72px]" />
        <Big n="sketch" lines={["在任务环境", "中绘制草图"]} className="w-[70px]" />
        <Big n="revolve" lines={["旋转"]} caret className="w-12" />
        <Big n="hole" lines={["孔"]} className="mr-2.5 w-8" />
        <SmallCol items={[["pattern", "阵列特征"], ["unite", "合并", true], ["shell", "抽壳"]]} />
        <Big n="edge" lines={["边倒圆"]} caret className="w-[58px]" />
        <SmallCol items={[["chamfer", "倒斜角"], ["trim", "修剪体"], ["draft", "拔模"]]} />
        <More n="more1" />
      </Group>
      <Group label="同步建模" className="w-[193px] [&>div:first-child]:pl-0.5">
        <Big n="moveFace" lines={["移动面"]} className="w-[62px]" />
        <SmallCol items={[["offset", "偏置区域"], ["replace", "替换面"], ["del", "删除面"]]} />
        <More n="sync" />
      </Group>
      <Group label="标准化工具..." className="w-[104px]">
        <IconGrid rows={[["std1", "layers", "layersDoc", "|", "tag"], ["chkBlock", "chkTool", "chkCube", "|", "calc"]]} />
      </Group>
      <Group label="齿..." className="w-[52px]">
        <IconGrid rows={[["gear1", "gear2"], ["ruler"]]} />
      </Group>
      <Group label="弹..." className="w-[58px]">
        <IconGrid rows={[["spring", "shock"], ["coil", "|", "scissor"]]} />
      </Group>
      <Group label="加..." className="w-[52px]">
        <IconGrid rows={[["chkPurple", "stack"], ["gridTool", "csys"]]} />
      </Group>
      <Group label="建模工具 ..." className="w-[98px]">
        <IconGrid rows={[["tri", "table", "folderPlus", "folderGear"], ["note", "brush", "|", "find"]]} />
      </Group>
      <Group label="'." className="w-[29px]">
        <IconGrid rows={[["boxes"], ["boxes"]]} />
      </Group>
      <Group label="尺寸快速格式化工具 - GC工具箱" className="w-[288px]">
        <IconGrid
          rows={[
            ["dim", "|", "x", "d1", "d2", "d3", "d2", "xBox", "xPar", "h1", "h2", "h2", "h3"],
            ["ra", "rb", "|", "dia1", "dia2", "back"],
          ]}
        />
      </Group>
      <section className="mt-0.5 mb-px w-[43px] shrink-0 border-r border-[#dcdcdc]">
        <Big n="surface" lines={["曲面"]} caret className="w-full" />
      </section>
      <Group label="装配" className="w-[205px] [&>div:first-child]:pl-2">
        <Big n="procAsm" lines={["处理装配"]} muted className="w-16" />
        <Big n="addComp" lines={["添加"]} caret className="mr-1 w-10" />
        <SmallCol items={[["constraint", "装配约束"], ["moveComp", "移动组件"], ["patComp", "阵列组件"]]} />
      </Group>
      <div className="flex items-end pb-px pl-0.5 text-sm leading-4 text-[#17697a]">分</div>
    </div>
  );
}

function FilterSelect({ value, className = "w-[176px]" }: { value: string; className?: string }) {
  return (
    <span className={`relative flex h-[25px] shrink-0 items-center ${className}`}>
      <select aria-label={value} className="size-full appearance-none border border-[#999] bg-[#fdfdfd] pl-0.5 text-sm">
        <option>{value}</option>
      </select>
      <Caret className="pointer-events-none absolute right-2" />
    </span>
  );
}

function ToolRun({ items }: { items: string[] }) {
  return (
    <>
      {items.map((n, i) =>
        n === "v" ? (
          <span key={i} className="flex w-3.5 shrink-0 justify-center"><Caret /></span>
        ) : (
          <IconButton key={i} n={n} className="w-[25px]" size="size-4" />
        )
      )}
    </>
  );
}

function FilterBar() {
  return (
    <div className="flex h-9 shrink-0 items-center overflow-hidden border-b border-[#888] bg-[#fdfdfd] pt-0.5">
      <Sep className="h-7" />
      <div className="mr-1 ml-2 flex items-center gap-2.5">
        <FilterSelect value="无选择过滤器" className="w-[168px]" />
        <FilterSelect value="仅在工作部件内" />
      </div>
      <ToolRun items={["f1", "f2", "f3", "v", "f4", "f5", "f6", "f7", "v", "f8", "f9"]} />
      <div className="mx-1 flex">
        <FilterSelect value="相连曲线" />
      </div>
      <ToolRun
        items={["s1", "s2", "s3", "s4", "s5", "s6", "s7", "s8", "s9", "s10", "s11", "s12", "s13", "s14", "s15", "s7", "s17", "s18", "s19"]}
      />
      <Sep className="mx-[7px] h-7" />
      <ToolRun items={["v1", "v2", "v3", "v4", "v5", "v6", "v", "v7", "v", "v8", "v", "v9", "v"]} />
      <Sep className="mx-2 h-7" />
    </div>
  );
}

/* ---------- part navigator ---------- */

type NavRow = { name: string; icon?: string; ok?: boolean; dim?: boolean; bold?: boolean };

const navRows: NavRow[] = [
  { name: "型视图" },
  { name: "摄像机" },
  { name: "户表达式" },
  { name: "型历史记录" },
  { name: "基准坐标系 (0)", icon: "csys", ok: true },
  { name: '草图 (1) "SKETC...', icon: "sketch", ok: true },
  { name: '草图 (2) "SKETC...', icon: "sketch", ok: true, dim: true },
  { name: "拉伸 (3)", icon: "extrude", ok: true, dim: true, bold: true },
  { name: "旋转 (5)", icon: "revolve", ok: true, dim: true },
];

const blankRows: NavRow[] = Array.from({ length: 17 }, () => ({ name: "" }));

function Navigator() {
  return (
    <aside className="flex w-80 shrink-0 flex-col border-r border-[#888] bg-[#fdfdfd] pr-2.5 text-[15px]">
      <div className="flex h-8 shrink-0 items-center justify-between pt-1 pr-1.5">
        <h2 className="-ml-2">航器</h2>
        <button type="button" aria-label="窗口" className="h-3 w-3.5 border border-t-2 border-black" />
      </div>
      <div className="flex-1 overflow-hidden border-t border-r border-[#ccc]">
        <table className="w-full table-fixed border-collapse text-left">
          <thead>
            <tr className="h-[25px] bg-[#ececec]">
              <th className="w-[143px] border-r border-b border-[#ccc] font-normal">
                <Caret className="-ml-px rotate-180" />
              </th>
              <th className="w-[100px] border-r border-b border-[#ccc] pl-1.5 font-normal">最新</th>
              <th className="border-b border-[#ccc] pl-1.5 font-normal">附注</th>
            </tr>
          </thead>
          <tbody>
            {[...navRows, ...blankRows].map((r, i) => (
              <tr key={i} className="h-6 even:bg-[#f8f8f8]">
                <td className="border-r border-b border-[#e4e4e4]">
                  <div className={`-ml-[3px] flex items-center gap-1 leading-5 whitespace-nowrap ${r.dim ? "text-[#999]" : ""} ${r.bold ? "font-bold" : ""}`}>
                    {r.icon ? <Ico n={r.icon} className="size-4" /> : null}
                    {r.name}
                  </div>
                </td>
                <td className="border-r border-b border-[#e4e4e4] pl-1.5">{r.ok ? <Check /> : null}</td>
                <td className="border-b border-[#e4e4e4]" />
              </tr>
            ))}
          </tbody>
        </table>
      </div>
      <div className="flex h-6 shrink-0 items-center justify-between border-r border-[#ccc] bg-[#f0f0f0]">
        <span className="h-[19px] w-[257px] bg-[#cacaca]" />
        <svg viewBox="0 0 8 10" className="mr-2 h-2.5 w-2" aria-hidden="true">
          <path d="M1 0l5 5-5 5" fill="none" stroke="#444" strokeWidth="2" />
        </svg>
      </div>
      <div className="h-[5px] shrink-0 border-y border-[#999] bg-[#ddd]" />
      {["性", "", ""].map((t, i) => (
        <button key={i} type="button" aria-label={t || "面板"} className="flex h-7 shrink-0 items-center justify-between border-b-2 border-[#ccc] pr-1 text-base text-[#17697a]">
          <span className="-ml-3">{t}</span>
          <Chevron down />
        </button>
      ))}
      <div className="h-1.5 shrink-0" />
    </aside>
  );
}

/* ---------- revolve dialog ---------- */

function Section({ title, children }: { title: string; children: ReactNode }) {
  return (
    <section className="mx-1.5 mb-1 bg-[#fdfdfd] pb-2 pl-[9px] shadow-[0_1px_1px_rgba(0,0,0,0.25)]">
      <button type="button" className="-ml-[2px] flex h-[34px] w-full items-center justify-between pr-1 pb-1.5 text-lg leading-none text-[#17697a]">
        {title}
        <Chevron />
      </button>
      <div className="flex flex-col gap-0.5 pr-[9px]">{children}</div>
    </section>
  );
}

function Field({ id, label, value, icon }: { id: string; label: string; value: string; icon?: string }) {
  return (
    <div className="flex h-7 items-center justify-between">
      <label htmlFor={id}>{label}</label>
      <span className="relative flex h-full w-[152px] items-center">
        <select id={id} className={`size-full appearance-none border border-[#999] bg-[#fdfdfd] ${icon ? "pl-6" : "pl-1"}`}>
          <option>{value}</option>
        </select>
        {icon ? <span className="pointer-events-none absolute left-1"><Ico n={icon} className="size-[17px]" /></span> : null}
        <Caret className="pointer-events-none absolute right-[7px]" />
      </span>
    </div>
  );
}

function Angle({ id, value }: { id: string; value: string }) {
  return (
    <div className="flex h-7 items-center justify-between">
      <label htmlFor={id}>角度</label>
      <span className="flex h-full w-[152px] items-center border border-[#999] bg-[#fdfdfd] pr-1.5 pl-1">
        <input id={id} defaultValue={value} className="w-0 flex-1 bg-transparent outline-none" />
        <span className="w-11">°</span>
        <Caret />
      </span>
    </div>
  );
}

const small = "size-6 border border-[#999] bg-[#fdfdfd]";

function RevolveDialog() {
  return (
    <div className="relative z-10 flex w-[380px] shrink-0 flex-col bg-[#ececec] text-[15px]">
      <div className="mb-1 flex h-[29px] shrink-0 items-center gap-2 bg-[#569fb5] px-2 text-white">
        <svg viewBox="0 0 16 16" className="size-4" aria-hidden="true">
          <circle cx="8" cy="8" r="6" fill="none" stroke="#fff" strokeWidth="3" strokeDasharray="2.600 2.110" />
          <circle cx="8" cy="8" r="4.500" fill="none" stroke="#fff" strokeWidth="2" />
          <circle cx="8" cy="8" r="1.200" fill="#fff" />
        </svg>
        <h2 className="flex-1 text-lg leading-none">旋转</h2>
        <button type="button" aria-label="重置">
          <svg viewBox="0 0 14 14" className="size-3.5" aria-hidden="true">
            <path d="M8 2a5 5 0 1 1-5.500 4M0 4h4v5" fill="none" stroke="#fff" strokeWidth="2" />
          </svg>
        </button>
        <button type="button" aria-label="关闭" className="pr-0.5 pl-0.5">
          <svg viewBox="0 0 12 12" className="size-3" aria-hidden="true">
            <path d="M1 1l10 10M11 1 1 11" stroke="#fff" strokeWidth="2" />
          </svg>
        </button>
      </div>

      <Section title="截面线">
        <div className="flex h-8 items-center gap-0.5">
          <div className="mr-0.5 flex h-full flex-1 items-center gap-1 bg-[#fbe07c] pl-0.5"><Check />选择曲线 (4)</div>
          <IconButton n="flip" className={small} size="size-4" />
          <IconButton n="section" className={small} size="size-4" />
          <IconButton n="curveRule" className="size-8 bg-[#fbe07c]" size="size-6" />
        </div>
        <div className="flex h-8 items-center justify-between">
          指定原始曲线
          <IconButton n="origin" className="size-8 border border-[#999]" size="size-7" />
        </div>
      </Section>

      <Section title="轴">
        <div className="flex h-8 items-center gap-0.5">
          <span className="flex flex-1 items-center gap-1 pl-0.5"><Check />指定矢量</span>
          <IconButton n="flip" className={small} size="size-4" />
          <IconButton n="vecDlg" className={small} size="size-4" />
          <div className="flex h-8 bg-[#abd0d8]">
            <IconButton n="axis" className="w-8 border-r border-white" size="size-6" />
            <button type="button" aria-label="矢量" className="flex w-[21px] items-center justify-center"><Caret /></button>
          </div>
        </div>
        <div className="flex h-8 items-center gap-0.5">
          <span className="flex-1">指定点</span>
          <IconButton n="ptDlg" className={small} size="size-4" />
          <div className="flex h-8 border border-[#999]">
            <IconButton n="inferred" className="w-[31px] border-r border-[#999]" size="size-5" />
            <button type="button" aria-label="点" className="flex w-5 items-center justify-center"><Caret /></button>
          </div>
        </div>
      </Section>

      <Section title="限制">
        <Field id="start" label="开始" value="值" icon="limits" />
        <Angle id="startAngle" value="0" />
        <Field id="end" label="结束" value="值" icon="limits" />
        <Angle id="endAngle" value="360" />
        <label className="flex h-6 items-center gap-1">
          <input type="checkbox" className="size-[18px] appearance-none border border-[#222] bg-white" />
          开放轮廓智能体
        </label>
      </Section>

      <Section title="布尔">
        <Field id="bool" label="布尔" value="无" icon="boolNone" />
      </Section>

      <Section title="偏置">
        <Field id="offset" label="偏置" value="无" />
      </Section>

      <Section title="设置">
        <Field id="body" label="体类型" value="实体" />
        <div className="flex h-[26px] items-center justify-between">
          <label htmlFor="tol">公差</label>
          <input id="tol" defaultValue="0. 0010" className="h-full w-[90px] border border-[#999] bg-[#fdfdfd] pr-1 text-right font-['Noto_Sans_CJK_SC',sans-serif] text-lg leading-none font-light outline-none" />
        </div>
      </Section>

      <div className="flex h-7 items-center justify-between pr-1 pl-2.5">
        <label className="flex items-center gap-1">
          <span className="relative flex">
            <input type="checkbox" defaultChecked className="size-[18px] appearance-none border border-[#222] bg-white" />
            <svg viewBox="0 0 18 18" className="pointer-events-none absolute inset-0" aria-hidden="true">
              <path d="M3 9l4 4 8-8" fill="none" stroke="#222" strokeWidth="1.500" />
            </svg>
          </span>
          预览
        </label>
        <button type="button" className="mr-1.5 flex items-center gap-0.5">
          显示结果
          <span className="flex size-6 items-center justify-center border border-[#999]"><Ico n="magnify" className="size-4" /></span>
        </button>
      </div>
      <div className="flex justify-end gap-[5px] pt-2.5 pr-4">
        <button type="button" className="h-7 w-[60px] bg-[#78b8ca] whitespace-nowrap text-white">&lt; 确定 &gt;</button>
        <button type="button" className="h-7 w-[60px] border border-[#999] bg-[#d8d8d8]">取消</button>
      </div>

      <svg viewBox="0 0 12 19" className="absolute top-[197px] left-[354px] z-20 h-[19px] w-3" aria-hidden="true">
        <path d="M1 1v15l3.500-3 2.500 5 2-1-2-5h4.500z" fill="#fff" stroke="#111" />
      </svg>
      <div role="tooltip" className="absolute top-[221px] left-[354px] border border-[#e2cdb0] bg-[#f5f0eb]/60 px-[7px] py-1.5 leading-[22px] whitespace-nowrap text-[#85704c]">
        曲线/轴矢量
      </div>
    </div>
  );
}

/* ---------- graphics window ---------- */

const OUTER = "rotate(7.5 625 486)";
const INNER = "rotate(7.5 619 487)";
const BAND = "rotate(7.4 590 759)";
const floorArc = "M25 805C75 765 130 732 200 710C290 682 380 670 470 670C700 672 860 750 970 808C1030 840 1080 890 1115 945";

function Model() {
  return (
    <svg viewBox="0 22 2303 1741" preserveAspectRatio="xMinYMin slice" className="absolute inset-0 size-full" aria-hidden="true">
      <defs>
        <linearGradient id="wall" gradientUnits="userSpaceOnUse" x1="0" y1="0" x2="1480" y2="0">
          <stop offset="0" stopColor="#a86500" />
          <stop offset=".22" stopColor="#985c00" />
          <stop offset=".42" stopColor="#8a5300" />
          <stop offset=".65" stopColor="#955a00" />
          <stop offset=".82" stopColor="#ad6a00" />
          <stop offset="1" stopColor="#c97a00" />
        </linearGradient>
        <linearGradient id="bore" gradientUnits="userSpaceOnUse" x1="0" y1="0" x2="1230" y2="0">
          <stop offset="0" stopColor="#b86e00" />
          <stop offset=".2" stopColor="#a56400" />
          <stop offset=".45" stopColor="#875100" />
          <stop offset=".75" stopColor="#945900" />
          <stop offset="1" stopColor="#ab6900" />
        </linearGradient>
        <clipPath id="topFace">
          <ellipse cx="625" cy="486" rx="866" ry="504" transform={OUTER} />
        </clipPath>
        <clipPath id="innerHole">
          <ellipse cx="619" cy="487" rx="614" ry="356" transform={INNER} />
        </clipPath>
      </defs>

      {/* outer wall */}
      <path
        d="M0 600H1480L1476 670 1412 1160C1408 1190 1400 1212 1392 1228C1350 1320 1270 1380 1205 1422C1110 1475 1000 1510 880 1533C800 1544 720 1548 640 1545C400 1538 200 1478 0 1378z"
        fill="url(#wall)"
      />
      <path
        d="M0 1155C150 1310 420 1395 640 1395C900 1395 1150 1280 1162 1130L1166 1030 1185 915 1340 888C1390 950 1414 1030 1414 1100L1412 1160C1408 1190 1400 1212 1392 1228C1350 1320 1270 1380 1205 1422C1110 1475 1000 1510 880 1533C800 1544 720 1548 640 1545C400 1538 200 1478 0 1378z"
        fill="#c48400"
        opacity=".2"
      />
      <path d="M0 1378C200 1478 400 1538 640 1545C720 1548 800 1544 880 1533C1000 1510 1110 1475 1205 1422C1270 1380 1350 1320 1392 1228C1400 1212 1408 1190 1412 1160" fill="none" stroke="#3a2a00" strokeWidth="2" />

      {/* top face */}
      <ellipse cx="625" cy="486" rx="866" ry="504" transform={OUTER} fill="#f6c203" />
      <g clipPath="url(#topFace)">
        <path d="M1213 700 1300 800V900H1180z" fill="#ffcc00" opacity=".8" />
        <ellipse cx="619" cy="487" rx="614" ry="356" transform={INNER} fill="url(#bore)" />
        <path d="M-10 430H300L600 700H1000L1231 530 1184 925 1115 1010H-10z" fill="url(#bore)" />
        <path d="M-10 650C60 560 220 519 400 518C700 522 1000 620 1130 702L1204 752 1184 925 1115 1010H-10z" fill="#c08a00" opacity=".25" />
        <path d={`${floorArc}L1100 1100H0V820z`} fill="#f6c203" />
        <g clipPath="url(#innerHole)">
          <path d={`${floorArc}z`} fill="#d2d5d8" />
          <path d={floorArc} fill="none" stroke="#3a2a00" strokeWidth="2" />
        </g>
      </g>
      <ellipse cx="619" cy="487" rx="614" ry="356" transform={INNER} fill="none" stroke="#3a2400" strokeWidth="2" />
      <ellipse cx="625" cy="486" rx="866" ry="504" transform={OUTER} fill="none" stroke="#3a2a00" strokeWidth="2" />

      {/* preview band */}
      <g transform={BAND}>
        <path
          fillRule="evenodd"
          d="M-147 759a737 434 0 1 0 1474 0a737 434 0 1 0-1474 0zM-114 759a704 411 0 1 0 1408 0a704 411 0 1 0-1408 0z"
          fill="#50a5a0"
          fillOpacity=".55"
          stroke="#3f98c8"
          strokeWidth="3"
        />
      </g>

      {/* section profile and handles */}
      <path d="M1180 388 1410 347 1340 888 1110 930z" fill="none" stroke="#ff9c42" strokeWidth="6" />
      <path d="M1178 390 1161 512" stroke="#6a6a3c" strokeWidth="7" />
      <path d="M1150 512h22l-14 48z" fill="#7a6a30" />
      <ellipse cx="1161" cy="511" rx="11" ry="7" fill="#e0c060" stroke="#7a6420" />
      <path d="M590 760 1250 642" stroke="#3a8ad0" strokeWidth="2" />
      <path d="M1262 638 1437 545" stroke="#b89018" strokeWidth="2" />
      <path d="M1243 618l22 14-10 14z" fill="#1c88c8" />
      <ellipse cx="1261" cy="638" rx="10" ry="8" fill="#a08c50" stroke="#6a5a28" />

      {/* datum axes */}
      <g fill="none" stroke="#2018c8" strokeWidth="2">
        <path d="M590 740 598 670M588 766 720 742 708 850M590 768 645 850" />
      </g>
      <path d="M598 648l9 31h-18zM840 843l-34-6v12z" fill="#140c98" />
      <g fill="none" stroke="#f6e2a0" strokeWidth="2.500">
        <path d="M570 888 708 862 765 948 632 972zM645 850 632 972 678 1035M708 862 800 846" />
      </g>
      <path d="M670 1035l12-5 14 26z" fill="#f4f0e4" />
      <path d="M570 888 586 760" stroke="#77683a" strokeWidth="7" />
      <path d="M587 733l9 32-18 3z" fill="#8a7a48" />
      <path d="M940 805v16h-16" stroke="#9ab0c0" strokeWidth="2" fill="none" />
      <g fontFamily="Liberation Sans, sans-serif" fontSize="30">
        <text x="592" y="645" fill="#4030c0">Z</text>
        <text x="844" y="845" fill="#2018c8" fontSize="24">Y</text>
        <text x="688" y="1076" fill="#fff">X</text>
      </g>
    </svg>
  );
}

function Viewport() {
  return (
    <div className="relative flex-1 overflow-hidden bg-linear-to-b from-[#b1b3b5] via-[#cfd1d3] via-50% to-[#e8e9eb]">
      <Model />
      <div className="absolute top-[210px] left-[642px] flex h-[35px] items-center border border-[#aaa] bg-[#f0f1f2] pr-1.5 pl-0.5 text-[15px]">
        <span className="mr-1.5 h-8 w-2 bg-[radial-gradient(#999_1px,transparent_1px)] bg-size-[4px_4px]" />
        <span className="relative flex h-7 w-[49px] items-center">
          <select aria-label="限制类型" className="size-full appearance-none border border-[#999] bg-[#fdfdfd]" />
          <span className="pointer-events-none absolute left-1"><Ico n="limits" className="size-[17px]" /></span>
          <Caret className="pointer-events-none absolute right-1.5" />
        </span>
        <label htmlFor="endValue" className="px-[3px] pl-1">结束</label>
        <span className="flex h-[26px] w-[78px] items-center border border-[#999] bg-[#fdfdfd] px-1">
          <input id="endValue" defaultValue="360" className="w-0 flex-1 bg-transparent outline-none" />
          <Caret />
        </span>
      </div>
    </div>
  );
}

function DocTabs() {
  return (
    <div className="flex h-[25px] shrink-0 bg-[#fdfdfd] text-base">
      <button type="button" className="flex w-[153px] items-center bg-[#569fb5] pl-1.5 text-white">
        <Ico n="prt" className="mr-1 size-4" />
        _model1.prt
        <svg viewBox="0 0 12 12" className="ml-1 size-3" aria-hidden="true">
          <path d="M7 1H2v10h7V8M7 1l3 3v2H6" fill="none" stroke="#fff" strokeWidth="1.800" />
        </svg>
        <svg viewBox="0 0 10 10" className="ml-1.5 size-2" aria-hidden="true">
          <path d="M1 1l8 8M9 1 1 9" stroke="#b8a8b8" strokeWidth="2.500" />
        </svg>
      </button>
      <button type="button" className="flex items-center pl-1.5">
        <Ico n="prt" className="mr-1 size-4" />
        _model3.prt
      </button>
    </div>
  );
}

/* ---------- taskbar ---------- */

function BrowserLogo() {
  return (
    <svg viewBox="0 0 26 26" className="size-[26px]" aria-hidden="true">
      <circle cx="13" cy="13" r="12" fill="#5cb82c" stroke="#e0f4d0" strokeWidth="1.500" />
      <path d="M6 14h14c0-9-13-9-13 0 0 7 9 7 12 3" fill="none" stroke="#fff" strokeWidth="3.500" />
      <path d="M2 24C2 12 12 2 24 1" fill="none" stroke="#8cd850" strokeWidth="1.500" />
    </svg>
  );
}

function ObsLogo({ className = "size-[29px]", rec = false }: { className?: string; rec?: boolean }) {
  return (
    <svg viewBox="0 0 28 28" className={className} aria-hidden="true">
      <circle cx="14" cy="14" r="13" fill="#0c0c0c" stroke="#e8e8e8" strokeWidth="1.500" />
      <path d="M11 4c-3 4-1 8 3 10M14 14c3-4 8-3 10 2M14 14c1 5-3 9-8 7" fill="none" stroke="#e8e8e8" strokeWidth="2.500" />
      {rec ? <circle cx="8" cy="21" r="6" fill="#d81818" /> : null}
    </svg>
  );
}

const explorerLogo = (
  <svg viewBox="0 0 26 26" className="size-[26px]" aria-hidden="true">
    <path d="M2 1h16v24H2z" fill="#f0c864" />
    <path d="M2 1l8 4v21l-8-2z" fill="#fce49c" />
    <path d="M11 8h13v16H11z" fill="#33384a" />
    <path d="M14 9h8v6h-8zM14 17h8v6h-8z" fill="#5878c8" />
    <path d="M16 12h6v2h-6z" fill="#c8a040" />
  </svg>
);

const nxLogo = (
  <svg viewBox="0 0 30 30" className="size-[29px]" aria-hidden="true">
    <circle cx="14" cy="16" r="11" fill="#1c94e0" />
    <path d="M7 17c2-5 8-6 11-2s-1 10-6 10-7-4-5-8z" fill="#6ae0f0" />
    <path d="M1 29c9 1 26-8 28-18 0-5-5-6-9-5 5 0 6 3 5 5-3 8-15 15-24 18z" fill="#f0b840" />
    <path d="M4 2l13-1-3 14z" fill="#c02850" />
    <path d="M4 2l13-1-6 5z" fill="#f08aa0" />
  </svg>
);

const tasks = [
  { text: "C:\\Users\\Adminis...", logo: explorerLogo },
  { text: "TIM-下载 - 360安...", logo: <BrowserLogo /> },
  { text: "唐康林_搜索_哔哩...", logo: <BrowserLogo /> },
  { text: "NX 12 - 建模", logo: nxLogo, active: true },
  { text: "OBS 25.0.1 (64-bi...", logo: <ObsLogo /> },
];

const tray: ReactNode[] = [
  <g>
    <rect width="20" height="20" rx="3" fill="#f0501c" />
    <path d="M4 4l6 4 6-3v11l-6-4-6 3z" fill="#fff" />
  </g>,
  null,
  <g>
    <path d="M0 2h20v16H0z" fill="#f4e8d8" />
    <path d="M2 7h16v9H2z" fill="#f4a83c" />
    <path d="M0 2h20v3H0z" fill="#f0f0f0" />
    <path d="M2 3.500h8" stroke="#333" />
  </g>,
  <g>
    <path d="M10 0l9 3v8c0 5-5 8-9 9-4-1-9-4-9-9V3z" fill="#f6a81c" />
    <path d="M14 4c2 7-1 11-5 13-3-3-3-6 0-8s3-4 5-5z" fill="#fff" />
  </g>,
  <path d="M2 8h3l6-6v17l-6-6H2z" fill="#e0604c" />,
  <g>
    <path d="M1 1h18v14H1z" fill="#888d92" />
    <path d="M1 16h8v3H1zM11 16h8v3h-8z" fill="#c8ccd0" />
  </g>,
  <g>
    <rect width="20" height="20" rx="2" fill="#3a423a" stroke="#888" />
    <path d="M1 10c4-6 10-6 14 0-3 5-11 5-14 0z" fill="#76b900" />
    <path d="M5 10c2-3 6-3 7 0-1 2-5 2-7 0z" fill="#2a3a1a" />
    <path d="M17 8v6M17 16v2" stroke="#e8f020" strokeWidth="2" />
  </g>,
  <g>
    <rect width="20" height="20" rx="2" fill="#3a70d0" />
    <circle cx="6" cy="6" r="3.500" fill="none" stroke="#fff" strokeWidth="1.500" />
    <path d="M11 5h6v8H5v-2M8 16h7" fill="none" stroke="#fff" strokeWidth="1.500" />
  </g>,
  <g>
    <rect x="3" width="14" height="20" rx="7" fill="#0a7ae0" />
    <path d="M6 6l8 8-4 3V3l4 3-8 8" fill="none" stroke="#fff" strokeWidth="1.300" />
  </g>,
  <g>
    <rect x="6" y="0" width="8" height="13" rx="2" fill="#fff" />
    <path d="M4 9c0 8 12 8 12 0M10 15v4M6 19h8" fill="none" stroke="#fff" strokeWidth="1.300" />
  </g>,
  <g fill="none" stroke="#fff" strokeWidth="1.400">
    <path d="M5 6h13v9H5v-5M18 8h2v4h-2M1 3v3h4V3M3 6v4h3" />
    <path d="M8 9h8v3H8z" fill="#fff" />
  </g>,
  <g fill="none" stroke="#dfe4e8" strokeWidth="1.400">
    <path d="M2 18C2 9 9 3 18 3M6 18c0-6 5-11 12-11M10 18c0-4 3-7 8-7" />
    <circle cx="16" cy="17" r="1.500" fill="#fff" />
  </g>,
  <g fill="none" stroke="#fff" strokeWidth="1.400">
    <path d="M1 8h3l4-4v12l-4-4H1zM11 7c1 2 1 4 0 6M14 5c2 3 2 7 0 10M17 3c3 4 3 10 0 14" />
  </g>,
  <g>
    <circle cx="10" cy="10" r="9.500" fill="#8a929c" />
    <path d="M6 6l8 8M14 6l-8 8" stroke="#222c38" strokeWidth="2.500" />
  </g>,
];

function Taskbar() {
  return (
    <footer className="flex h-[50px] shrink-0 items-center overflow-hidden bg-linear-to-r from-[#1f3741] via-[#1f3440] to-[#18263a] text-[15px] text-white">
      <button type="button" aria-label="Cortana" className="h-full w-7 shrink-0">
        <svg viewBox="0 0 28 14" className="h-3.5 w-7" aria-hidden="true">
          <circle cx="-3" cy="7" r="6.500" fill="none" stroke="#ddd" strokeWidth="1.500" />
        </svg>
      </button>
      <div className="flex h-full gap-px">
        {tasks.map((t) => (
          <button
            key={t.text}
            type="button"
            className={`relative flex w-[200px] items-center gap-1.5 pl-3.5 whitespace-nowrap ${t.active ? "bg-[#4d5f68]" : ""}`}
          >
            {t.logo}
            {t.text}
            <span className={`absolute bottom-0 h-[3px] bg-[#76aee0] ${t.active ? "inset-x-0" : "inset-x-[5px]"}`} />
          </button>
        ))}
      </div>
      <div className="ml-auto flex items-center">
        {tray.map((g, i) => (
          <span key={i} className="flex w-[30px] justify-center">
            {g ? <svg viewBox="0 0 20 20" className="size-[19px]" aria-hidden="true">{g}</svg> : <ObsLogo className="size-5" rec />}
          </span>
        ))}
        <span className="flex w-10 justify-center">
          <svg viewBox="0 0 20 20" className="size-5" aria-hidden="true">
            <path d="M0 0h20v20H0z" fill="#fff" />
            <path d="M1 9l8 8M8 10l11-9" stroke="#1c2a38" strokeWidth="2" />
            <circle cx="9" cy="11" r="2.500" fill="#1c2a38" />
          </svg>
        </span>
      </div>
      <time className="ml-3 w-[54px] leading-[23px] whitespace-nowrap">
        <span className="block pl-[18px]">16:19</span>
        <span className="block">2022/6/</span>
      </time>
    </footer>
  );
}

export default function App() {
  return (
    <div className="flex h-screen flex-col overflow-hidden bg-[#fdfdfd] font-['Noto_Sans','Noto_Sans_CJK_SC',sans-serif] text-[#1c1c1c]">
      <TitleBar />
      <MenuTabs />
      <Ribbon />
      <FilterBar />
      <main className="flex min-h-0 flex-1">
        <Navigator />
        <div className="flex min-w-0 flex-1 flex-col">
          <DocTabs />
          <div className="flex min-h-0 flex-1 border-t-2 border-[#569fb5]">
            <div className="-mt-0.5 flex"><RevolveDialog /></div>
            <Viewport />
          </div>
        </div>
      </main>
      <div className="flex h-[23px] shrink-0 items-center border-t border-[#999] text-[13px] font-medium">
        <span className="-ml-2">图形</span>
      </div>
      <Taskbar />
    </div>
  );
}
